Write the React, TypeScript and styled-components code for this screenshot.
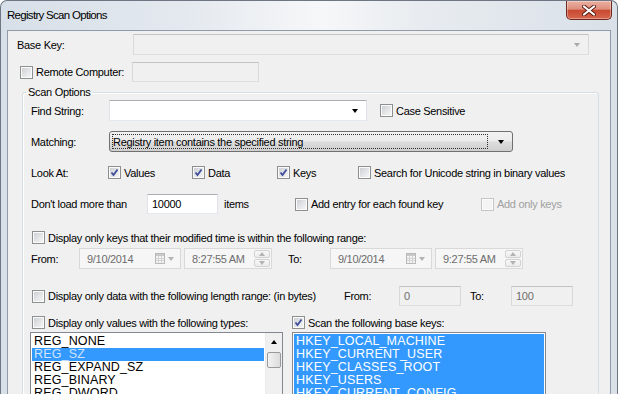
import React from 'react';
import styled, { createGlobalStyle } from 'styled-components';

const FONT = `"Liberation Sans", Arial, sans-serif`;

const GlobalStyle = createGlobalStyle`
  html, body {
    margin: 0;
    padding: 0;
    background: #fff;
  }
  body {
    font-family: ${FONT};
    font-size: 11px;
    letter-spacing: -0.3px;
    color: #000;
  }
  * {
    box-sizing: border-box;
  }
`;

function App() {
  return (
    <>
      <GlobalStyle />
      <Window>
        <TitleBar>
          <Title>Registry Scan Options</Title>
          <CloseButton>
            <svg width="14" height="11" viewBox="0 0 14 11">
              <path d="M2 1.5 L12 9.5 M12 1.5 L2 9.5" stroke="#5b1d14" strokeWidth="4" strokeLinecap="round" />
              <path d="M2 1.5 L12 9.5 M12 1.5 L2 9.5" stroke="#fff" strokeWidth="2.2" strokeLinecap="round" />
            </svg>
          </CloseButton>
        </TitleBar>

        <Frame>
          <Client>
            <Row $mt={3} $h={21} $pl={9}>
              <Label $w={116}>Base Key:</Label>
              <Field $w={456} $h={21} $disabled>
                <FieldText />
                <Arrow $color="#a9a9a9" />
              </Field>
            </Row>

            <Row $mt={7} $h={20} $pl={12}>
              <CheckItem $w={112} label="Remote Computer:" />
              <Field $w={127} $h={20} $disabled />
            </Row>

            <Group>
              <Legend>Scan Options</Legend>

              <Row $mt={1} $h={21}>
                <Label $w={78}>Find String:</Label>
                <Field $w={258} $h={21}>
                  <FieldText />
                  <Arrow $color="#000" />
                </Field>
                <Spacer $w={13} />
                <CheckItem label="Case Sensitive" />
              </Row>

              <Row $mt={10} $h={21}>
                <Label $w={78}>Matching:</Label>
                <DropButton>
                  <FocusRect>Registry item contains the specified string</FocusRect>
                  <Arrow $color="#000" />
                </DropButton>
              </Row>

              <Row $mt={14} $h={13}>
                <Label $w={77}>Look At:</Label>
                <CheckItem $w={84} label="Values" checked />
                <CheckItem $w={85} label="Data" checked />
                <CheckItem $w={81} label="Keys" checked />
                <CheckItem label="Search for Unicode string in binary values" />
              </Row>

              <Row $mt={15} $h={20}>
                <Label $w={116}>Don't load more than</Label>
                <Field $w={71} $h={20}>
                  <FieldText>10000</FieldText>
                </Field>
                <Spacer $w={6} />
                <Label $w={71}>items</Label>
                <CheckItem $w={186} label="Add entry for each found key" />
                <CheckItem label="Add only keys" disabled />
              </Row>

              <Row $mt={17} $h={13} $pl={1}>
                <CheckItem label="Display only keys that their modified time is within the following range:" />
              </Row>

              <Row $mt={4} $h={21}>
                <Label $w={48}>From:</Label>
                <DatePicker value="9/10/2014" />
                <Spacer $w={3} />
                <TimePicker value="8:27:55 AM" />
                <Spacer $w={16} />
                <Label $w={42}>To:</Label>
                <DatePicker value="9/10/2014" />
                <Spacer $w={3} />
                <TimePicker value="9:27:55 AM" />
              </Row>

              <Row $mt={17} $h={20} $pl={1}>
                <CheckItem $w={312} label="Display only data with the following length range: (in bytes)" />
                <Label $w={55}>From:</Label>
                <Field $w={62} $h={20} $disabled>
                  <FieldText>0</FieldText>
                </Field>
                <Spacer $w={9} />
                <Label $w={41}>To:</Label>
                <Field $w={62} $h={20} $disabled>
                  <FieldText>100</FieldText>
                </Field>
              </Row>

              <Row $mt={10} $h={13} $pl={1}>
                <CheckItem $w={260} label="Display only values with the following types:" />
                <CheckItem label="Scan the following base keys:" checked />
              </Row>

              <ListsRow>
                <ListBox $w={253}>
                  <Items>
                    <Item>REG_NONE</Item>
                    <Item $selected>REG_SZ</Item>
                    <Item>REG_EXPAND_SZ</Item>
                    <Item>REG_BINARY</Item>
                    <Item>REG_DWORD</Item>
                  </Items>
                  <ScrollBar>
                    <ScrollButton>
                      <Arrow $color="#000" $up />
                    </ScrollButton>
                    <Thumb />
                  </ScrollBar>
                </ListBox>
                <ListBox $w={254} $allSelected>
                  <Items>
                    <Item $selected $all>HKEY_LOCAL_MACHINE</Item>
                    <Item $selected $all>HKEY_CURRENT_USER</Item>
                    <Item $selected $all>HKEY_CLASSES_ROOT</Item>
                    <Item $selected $all>HKEY_USERS</Item>
                    <Item $selected $all>HKEY_CURRENT_CONFIG</Item>
                  </Items>
                </ListBox>
              </ListsRow>
            </Group>
          </Client>
        </Frame>
      </Window>
    </>
  );
}

export default App;

function CheckItem({
  label,
  checked,
  disabled,
  $w,
}: {
  label: string;
  checked?: boolean;
  disabled?: boolean;
  $w?: number;
}) {
  return (
    <CheckWrap $w={$w} $disabled={disabled}>
      <CheckBox $disabled={disabled}>
        {checked && (
          <svg width="11" height="11" viewBox="0 0 11 11">
            <path d="M2.5 5.5 L4.5 8 L8.5 2.5" fill="none" stroke="#3f4d9a" strokeWidth="1.8" />
          </svg>
        )}
      </CheckBox>
      <span>{label}</span>
    </CheckWrap>
  );
}

function DatePicker({ value }: { value: string }) {
  return (
    <PickerBox $w={102}>
      <PickerText>{value}</PickerText>
      <svg width="10" height="11" viewBox="0 0 10 11">
        <rect x="0.5" y="0.5" width="9" height="10" fill="#f4f4f4" stroke="#b9b9b9" />
        <rect x="1" y="1" width="8" height="2" fill="#c9c9c9" />
        <path d="M1 5.5 H9 M1 7.5 H9 M3.5 3 V10 M6.5 3 V10" stroke="#d4d4d4" />
      </svg>
      <Spacer $w={3} />
      <Arrow $color="#b3b3b3" />
      <Spacer $w={6} />
    </PickerBox>
  );
}

function TimePicker({ value }: { value: string }) {
  return (
    <PickerBox $w={88}>
      <PickerText>{value}</PickerText>
      <Spin>
        <SpinButton>
          <Arrow $color="#b3b3b3" $up />
        </SpinButton>
        <SpinButton>
          <Arrow $color="#b3b3b3" />
        </SpinButton>
      </Spin>
    </PickerBox>
  );
}

const Window = styled.div`
  width: 618px;
  height: 394px;
  overflow: hidden;
  display: flex;
  flex-direction: column;
  border: 1px solid #6d7682;
  border-bottom: none;
  border-radius: 7px 7px 0 0;
  background: linear-gradient(
    90deg,
    #d7dfe8 0%,
    #e4e9ef 30%,
    #f6f7f8 52%,
    #e8ecf0 68%,
    #d9e0e8 100%
  );
`;

const TitleBar = styled.div`
  height: 29px;
  display: flex;
  align-items: flex-start;
  padding-left: 6px;
`;

const Title = styled.div`
  line-height: 29px;
  font-size: 11.5px;
  letter-spacing: -0.7px;
  color: #000;
`;

const CloseButton = styled.div`
  margin-left: auto;
  margin-right: 5px;
  width: 46px;
  height: 19px;
  display: flex;
  align-items: center;
  justify-content: center;
  border: 1px solid #6e2a1f;
  border-top: none;
  border-radius: 0 0 5px 5px;
  background: linear-gradient(
    180deg,
    #eab0a2 0%,
    #df8e7c 45%,
    #c94a33 52%,
    #d7654c 100%
  );
  box-shadow: inset 0 0 0 1px rgba(255, 255, 255, 0.35);
`;

const Frame = styled.div`
  flex: 1;
  display: flex;
  padding: 0 6px;
`;

const Client = styled.div`
  flex: 1;
  display: flex;
  flex-direction: column;
  background: #f0f0f0;
  border: 1px solid #8f9ba8;
  border-bottom: none;
`;

const Row = styled.div<{ $mt: number; $h: number; $pl?: number }>`
  display: flex;
  align-items: center;
  flex: none;
  margin-top: ${(p) => p.$mt}px;
  height: ${(p) => p.$h}px;
  padding-left: ${(p) => p.$pl ?? 0}px;
`;

const Label = styled.span<{ $w?: number }>`
  flex: none;
  width: ${(p) => (p.$w ? `${p.$w}px` : 'auto')};
  white-space: nowrap;
`;

const Spacer = styled.span<{ $w: number }>`
  flex: none;
  width: ${(p) => p.$w}px;
`;

const Field = styled.div<{ $w: number; $h: number; $disabled?: boolean }>`
  flex: none;
  width: ${(p) => p.$w}px;
  height: ${(p) => p.$h}px;
  display: flex;
  align-items: center;
  padding: 0 8px 0 4px;
  border: 1px solid;
  border-color: ${(p) =>
    p.$disabled ? '#c3c3c3 #d9d9d9 #dedede #d9d9d9' : '#abadb3 #e2e3ea #e3e9ef #e2e3ea'};
  background: ${(p) => (p.$disabled ? '#f0f0f0' : '#fff')};
  color: ${(p) => (p.$disabled ? '#6d6d6d' : '#000')};
`;

const FieldText = styled.span`
  flex: 1;
  white-space: nowrap;
`;

const Arrow = styled.span<{ $color: string; $up?: boolean }>`
  flex: none;
  width: 0;
  height: 0;
  border-left: 3.5px solid transparent;
  border-right: 3.5px solid transparent;
  ${(p) =>
    p.$up
      ? `border-bottom: 4px solid ${p.$color};`
      : `border-top: 4px solid ${p.$color};`}
`;

const Group = styled.fieldset`
  margin: 3px 0 0 14px;
  width: 577px;
  padding: 0 0 0 8px;
  border: 1px solid #d5dfe5;
  border-bottom: none;
  border-radius: 3px 3px 0 0;
  box-shadow: inset 1px 1px #fff;
  min-width: 0;
`;

const Legend = styled.legend`
  margin-left: -5px;
  padding: 0 2px;
  line-height: 14px;
`;

const CheckWrap = styled.label<{ $w?: number; $disabled?: boolean }>`
  flex: none;
  display: flex;
  align-items: center;
  gap: 3px;
  width: ${(p) => (p.$w ? `${p.$w}px` : 'auto')};
  white-space: nowrap;
  color: ${(p) => (p.$disabled ? '#a0a0a0' : '#000')};
`;

const CheckBox = styled.span<{ $disabled?: boolean }>`
  flex: none;
  position: relative;
  width: 13px;
  height: 13px;
  border: 1px solid ${(p) => (p.$disabled ? '#c5c5c5' : '#8e8f8f')};
  background: ${(p) =>
    p.$disabled
      ? '#f4f4f4'
      : 'linear-gradient(135deg, #c9ccd1 0%, #e4e6e8 55%, #f7f7f7 100%)'};
  box-shadow: inset 0 0 0 1px #fbfbfb;

  svg {
    position: absolute;
    left: 0;
    top: 0;
  }
`;

const DropButton = styled.div`
  flex: none;
  width: 404px;
  height: 21px;
  display: flex;
  align-items: center;
  padding: 2px 8px 2px 2px;
  border: 1px solid #707070;
  border-radius: 3px;
  background: linear-gradient(180deg, #f2f2f2 0%, #ebebeb 48%, #dddddd 52%, #cfcfcf 100%);
`;

const FocusRect = styled.span`
  flex: 1;
  height: 100%;
  display: flex;
  align-items: center;
  padding-left: 1px;
  margin-right: 10px;
  outline: 1px dotted #303030;
  outline-offset: -1px;
  white-space: nowrap;
`;

const PickerBox = styled.div<{ $w: number }>`
  flex: none;
  width: ${(p) => p.$w}px;
  height: 21px;
  display: flex;
  align-items: center;
  padding-left: 7px;
  border: 1px solid #d9d9d9;
  background: #f6f6f6;
  color: #6d6d6d;
`;

const PickerText = styled.span`
  flex: 1;
  white-space: nowrap;
`;

const Spin = styled.div`
  flex: none;
  width: 16px;
  height: 17px;
  margin-right: 1px;
  display: flex;
  flex-direction: column;
  gap: 1px;
`;

const SpinButton = styled.div`
  flex: 1;
  display: flex;
  align-items: center;
  justify-content: center;
  border: 1px solid #d2d2d2;
  border-radius: 2px;
  background: linear-gradient(180deg, #f7f7f7, #ececec);
`;

const ListsRow = styled.div`
  display: flex;
  gap: 9px;
  margin: 3px 0 0 -1px;
  height: 80px;
`;

const ListBox = styled.div<{ $w: number; $allSelected?: boolean }>`
  flex: none;
  width: ${(p) => p.$w}px;
  display: flex;
  border: 1px solid #828790;
  border-bottom: none;
  background: ${(p) => (p.$allSelected ? '#3399ff' : '#fff')};
  box-shadow: inset 1px 1px #fff, inset -1px 0 #fff;
  font-size: 12.5px;
  letter-spacing: 0.15px;
`;

const Items = styled.div`
  flex: 1;
  padding: 2px 1px 0;
`;

const Item = styled.div<{ $selected?: boolean; $all?: boolean }>`
  height: 13px;
  line-height: 13px;
  padding-left: 2px;
  white-space: nowrap;
  background: ${(p) => (p.$selected ? '#3399ff' : 'transparent')};
  color: ${(p) => (p.$all ? '#fff' : p.$selected ? '#cfe3fb' : '#000')};
`;

const ScrollBar = styled.div`
  flex: none;
  width: 17px;
  display: flex;
  flex-direction: column;
  align-items: center;
  background: #f0f0f0;
  border-left: 1px solid #eaeaea;
`;

const ScrollButton = styled.div`
  width: 16px;
  height: 17px;
  display: flex;
  align-items: center;
  justify-content: center;
`;

const Thumb = styled.div`
  width: 14px;
  height: 16px;
  margin-top: 2px;
  border: 1px solid #9a9a9a;
  border-radius: 2px;
  background: linear-gradient(90deg, #f3f3f3, #dcdcdc);
`;
